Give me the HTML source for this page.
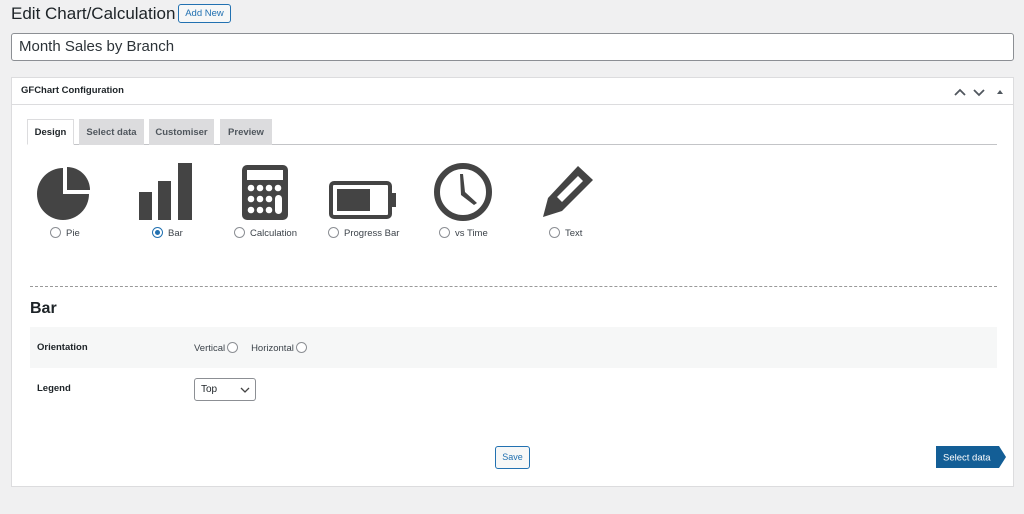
<!DOCTYPE html>
<html><head><meta charset="utf-8"><style>
*{box-sizing:border-box;margin:0;padding:0}
body{width:1024px;height:514px;background:#f0f0f1;font-family:"Liberation Sans",sans-serif;color:#1d2327;position:relative;overflow:hidden}
.abs{position:absolute}
h1{position:absolute;left:11px;top:4px;font-size:17px;font-weight:400;color:#1d2327}
.addnew{left:178px;top:4px;width:53px;height:19px;border:1px solid #2271b1;border-radius:3px;color:#2271b1;font-size:9.5px;text-align:center;line-height:17px;background:#f6f7f7}
.title{left:11px;top:33px;width:1003px;height:28px;border:1px solid #8c8f94;border-radius:3px;background:#fff;font-size:15px;padding-left:7px;line-height:26px;color:#2c3338}
.panel{left:11px;top:77px;width:1003px;height:410px;background:#fff;border:1px solid #dcdcde}
.ph{left:0;top:0;width:1001px;height:27px;border-bottom:1px solid #dcdcde;font-size:9.5px;font-weight:700;padding-left:9px;line-height:26px}
.tab{top:41px;height:26px;font-size:9.5px;font-weight:700;text-align:center;line-height:25px;border:1px solid #dcdcde;background:#dcdcde;color:#50575e}
.lbl{font-size:9.5px;color:#3c434a;top:149px;white-space:nowrap}
.rad{display:inline-block;width:11px;height:11px;border:1px solid #8c8f94;border-radius:50%;vertical-align:-2px;margin-right:5px;background:#fff;position:relative}
.rad.on{border-color:#2271b1}
.rad.on:after{content:"";position:absolute;left:2px;top:2px;width:5px;height:5px;border-radius:50%;background:#2271b1}
svg{position:absolute}
</style></head><body>
<h1>Edit Chart/Calculation</h1>
<div class="abs addnew">Add New</div>
<div class="abs title">Month Sales by Branch</div>
<div class="abs panel">
 <div class="abs ph">GFChart Configuration</div>
 <svg style="left:940px;top:7px" width="60" height="14"><path d="M3 10 L8 5 L13 10" stroke="#50575e" stroke-width="1.8" fill="none"/><path d="M22 5 L27 10 L32 5" stroke="#50575e" stroke-width="1.8" fill="none"/><path d="M45 9 L48 5 L51 9Z" fill="#50575e"/></svg>
 <div class="abs" style="left:17px;top:66px;width:968px;border-top:1px solid #c3c4c7"></div>
 <div class="abs tab" style="left:15px;width:47px;background:#fff;color:#1d2327;border-bottom-color:#fff;z-index:2">Design</div>
 <div class="abs tab" style="left:67px;width:65px">Select data</div>
 <div class="abs tab" style="left:137px;width:65px">Customiser</div>
 <div class="abs tab" style="left:208px;width:52px">Preview</div>

 <!-- pie -->
 <svg style="left:23px;top:86px" width="60" height="60"><path d="M28 30 L28 4 A26 26 0 1 0 54 30 Z" fill="#444"/><path d="M32 26 L32 3 A23 23 0 0 1 55 26 Z" fill="#444"/></svg>
 <!-- bar -->
 <svg style="left:127px;top:84px" width="60" height="60"><rect x="0" y="30" width="13" height="28" fill="#444"/><rect x="19" y="19" width="13" height="39" fill="#444"/><rect x="39" y="1" width="14" height="57" fill="#444"/></svg>
 <!-- calc -->
 <svg style="left:229px;top:86px" width="50" height="58"><rect x="1" y="1" width="46" height="55" rx="5" fill="#444"/><rect x="6" y="6" width="36" height="10" fill="#fff"/>
 <g fill="#fff"><circle cx="10" cy="24" r="3.3"/><circle cx="19" cy="24" r="3.3"/><circle cx="28" cy="24" r="3.3"/><circle cx="37" cy="24" r="3.3"/><circle cx="10" cy="35" r="3.3"/><circle cx="19" cy="35" r="3.3"/><circle cx="28" cy="35" r="3.3"/><circle cx="10" cy="46" r="3.3"/><circle cx="19" cy="46" r="3.3"/><circle cx="28" cy="46" r="3.3"/><rect x="34" y="31" width="7" height="19" rx="3.5"/></g></svg>
 <!-- battery -->
 <svg style="left:317px;top:103px" width="70" height="40"><rect x="2" y="2" width="59" height="34" rx="3" fill="none" stroke="#444" stroke-width="4"/><rect x="8" y="8" width="33" height="22" fill="#444"/><rect x="61" y="12" width="6" height="14" fill="#444"/></svg>
 <!-- clock -->
 <svg style="left:421px;top:84px" width="60" height="60"><circle cx="30" cy="30" r="26" fill="none" stroke="#444" stroke-width="6"/><path d="M27 12 L30 12 L32 30 L44 41 L41 43 L28 33Z" fill="#444"/></svg>
 <!-- pencil -->
 <svg style="left:528px;top:86px" width="56" height="56"><path d="M38 2 L53 16 L22 47 L3 53 L8 34Z" fill="#444"/><path d="M38 12 L43 17 L22 38 L17 33Z" fill="#fff"/></svg>

 <div class="abs lbl" style="left:38px"><span class="rad"></span>Pie</div>
 <div class="abs lbl" style="left:140px"><span class="rad on"></span>Bar</div>
 <div class="abs lbl" style="left:222px"><span class="rad"></span>Calculation</div>
 <div class="abs lbl" style="left:316px"><span class="rad"></span>Progress Bar</div>
 <div class="abs lbl" style="left:427px"><span class="rad"></span>vs Time</div>
 <div class="abs lbl" style="left:537px"><span class="rad"></span>Text</div>

 <div class="abs" style="left:18px;top:208px;width:967px;border-top:1px dashed #999"></div>
 <div class="abs" style="left:18px;top:222px;font-size:16px;font-weight:700">Bar</div>
 <div class="abs" style="left:18px;top:249px;width:967px;height:41px;background:#f6f7f7"></div>
 <div class="abs" style="left:25px;top:264px;font-size:9.5px;font-weight:700">Orientation</div>
 <div class="abs" style="left:182px;top:264px;font-size:9.5px;color:#3c434a">Vertical<span class="rad" style="margin-left:2px"></span>&nbsp;&nbsp;&nbsp;Horizontal<span class="rad" style="margin-left:2px"></span></div>
 <div class="abs" style="left:25px;top:305px;font-size:9.5px;font-weight:700">Legend</div>
 <div class="abs" style="left:182px;top:300px;width:62px;height:23px;border:1px solid #8c8f94;border-radius:3px;font-size:10px;line-height:21px;padding-left:6px">Top</div>
 <svg style="left:228px;top:309px" width="10" height="6"><path d="M1 1 L5 5 L9 1" stroke="#444" stroke-width="1.3" fill="none"/></svg>
 <div class="abs" style="left:483px;top:368px;width:35px;height:23px;border:1px solid #2271b1;border-radius:3px;font-size:9px;color:#2271b1;text-align:center;line-height:21px;background:#f6f7f7">Save</div>
 <svg style="left:924px;top:368px" width="70" height="22"><path d="M0 0 L63 0 L70 11 L63 22 L0 22Z" fill="#135e96"/><text x="7" y="14.5" font-size="9.5" fill="#fff" font-family="Liberation Sans">Select data</text></svg>
</div>
</body></html>
